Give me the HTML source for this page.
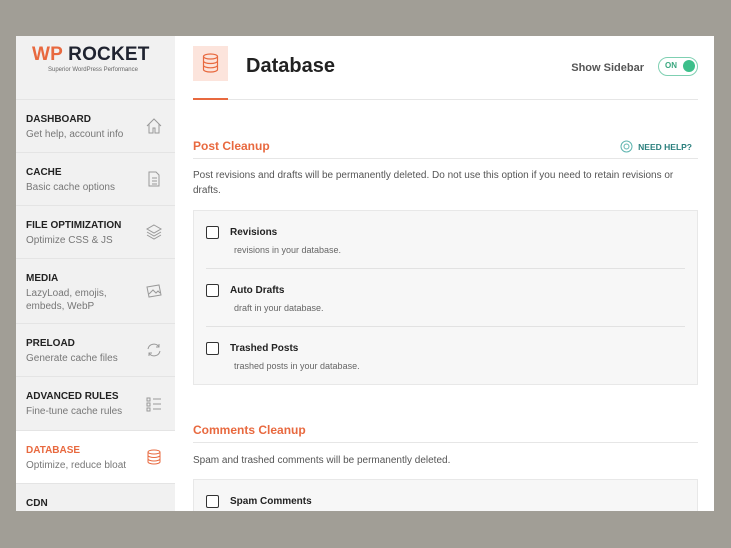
<!DOCTYPE html><html><head><style>
*{margin:0;padding:0;box-sizing:border-box}
body{width:731px;height:548px;background:#a19e96;font-family:"Liberation Sans",sans-serif;position:relative;overflow:hidden}
#app{position:absolute;left:16px;top:36px;width:698px;height:475px;background:#fff;overflow:hidden}
#side{position:absolute;left:0;top:0;width:159px;height:475px;background:#f1f1f1}
.logo{height:64px;border-bottom:1px solid #e4e4e4;position:relative}
.logo .t{position:absolute;left:16px;top:8px;font-weight:bold;font-size:19px;color:#1f2330;letter-spacing:0.2px}
.logo .t span{color:#e8693f}
.logo .s{position:absolute;left:32px;top:31px;font-size:6px;color:#666}
.it{position:relative;border-bottom:1px solid #e4e4e4;padding:14px 0 0 10px}
.it b{display:block;font-size:10px;color:#222}
.it i{display:block;font-style:normal;font-size:10px;color:#777;margin-top:3px;line-height:13px}
.it svg{position:absolute;right:12px;top:50%;margin-top:-9px}
.it.act{background:#fff}.it.act b{color:#e8693f}
#main{position:absolute;left:177px;top:0;right:16px}
.hico{position:absolute;left:0;top:10px;width:35px;height:35px;background:#fce4dc}
h1{position:absolute;left:53px;top:19px;font-size:20px;font-weight:bold;color:#222}
.ss{position:absolute;right:54px;top:26px;font-size:11px;font-weight:bold;color:#555}
.tg{position:absolute;right:0;top:21px;width:40px;height:19px;border:1.5px solid #7fd0b2;border-radius:10px}
.tg span{position:absolute;left:6px;top:3px;font-size:8px;font-weight:bold;color:#3aa77f}
.tg i{position:absolute;right:2px;top:2px;width:12px;height:12px;border-radius:50%;background:#3cbf8a}
.hl{position:absolute;left:0;right:0;top:63px;height:1px;background:#e6e6e6}
.hl2{position:absolute;left:0;top:62px;width:35px;height:2px;background:#e8693f}
.sec{position:absolute;left:0;right:0;font-size:12px;font-weight:bold;color:#e8693f;border-bottom:1px solid #e6e6e6;height:20px}
.nh{position:absolute;right:6px;top:104px;font-size:8.5px;font-weight:bold;color:#2a7f7d}
.p{position:absolute;left:0;right:0;font-size:10px;color:#555;line-height:15px}
.box{position:absolute;left:0;right:0;background:#f7f7f7;border:1px solid #e8e8e8}
.row{position:relative;height:58px;margin:0 12px;border-bottom:1px solid #e2e2e2}
.row:last-child{border:none}
.cb{position:absolute;left:0;top:15px;width:13px;height:13px;border:1.5px solid #333;border-radius:2px;background:#fff}
.row b{position:absolute;left:24px;top:16px;font-size:10px;color:#222}
.row i{position:absolute;left:28px;top:34px;font-size:9px;color:#666;font-style:normal}
</style></head><body><div id="app">
<div id="side">
<div class="logo"><div class="t"><span>WP</span> ROCKET</div><div class="s">Superior WordPress Performance</div></div>
<div class="it" style="height:53px"><b>DASHBOARD</b><i>Get help, account info</i><svg width="18" height="18" viewBox="0 0 18 18" fill="none" stroke="#999"><path d="M2 9L9 2l7 7M4 7v9h4v-5h2v5h4V7"/></svg></div>
<div class="it" style="height:53px"><b>CACHE</b><i>Basic cache options</i><svg width="18" height="18" viewBox="0 0 18 18" fill="none" stroke="#999"><path d="M4 2h7l3 3v11H4zM7 8h5M7 11h5M7 14h5"/></svg></div>
<div class="it" style="height:53px"><b>FILE OPTIMIZATION</b><i>Optimize CSS &amp; JS</i><svg width="18" height="18" viewBox="0 0 18 18" fill="none" stroke="#999"><path d="M9 2l7 4-7 4-7-4zM2 9l7 4 7-4M2 12l7 4 7-4"/></svg></div>
<div class="it" style="height:65px"><b>MEDIA</b><i>LazyLoad, emojis,<br>embeds, WebP</i><svg width="18" height="18" viewBox="0 0 18 18" fill="none" stroke="#999"><path d="M2 5l12-2 2 10-12 2zM4 12l4-4 3 3 2-2 2 2"/></svg></div>
<div class="it" style="height:53px"><b>PRELOAD</b><i>Generate cache files</i><svg width="18" height="18" viewBox="0 0 18 18" fill="none" stroke="#999"><path d="M3 8a6 6 0 0 1 11-2M15 10a6 6 0 0 1-11 2M14 3v3h-3M4 15v-3h3"/></svg></div>
<div class="it" style="height:54px"><b>ADVANCED RULES</b><i>Fine-tune cache rules</i><svg width="18" height="18" viewBox="0 0 18 18" fill="none" stroke="#999"><path d="M2 3h3v3H2zM2 8h3v3H2zM2 13h3v3H2zM8 4h8M8 9h8M8 14h8"/></svg></div>
<div class="it act" style="height:53px"><b>DATABASE</b><i>Optimize, reduce bloat</i><svg width="18" height="18" viewBox="0 0 18 18" fill="none" stroke="#e8693f"><ellipse cx="9" cy="4" rx="6" ry="2"/><path d="M3 4v10c0 1 3 2 6 2s6-1 6-2V4M3 7.5c0 1 3 2 6 2s6-1 6-2M3 11c0 1 3 2 6 2s6-1 6-2"/></svg></div>
<div class="it" style="height:53px"><b>CDN</b><i>&nbsp;</i></div>
</div>
<div id="main">
<div class="hico"><svg width="35" height="35" viewBox="0 0 35 35" fill="none" stroke="#e8693f" stroke-width="1.2"><ellipse cx="17.5" cy="10.5" rx="7" ry="2.5"/><path d="M10.5 10.5v13c0 1.4 3.2 2.5 7 2.5s7-1.1 7-2.5v-13M10.5 15c0 1.4 3.2 2.5 7 2.5s7-1.1 7-2.5M10.5 19.3c0 1.4 3.2 2.5 7 2.5s7-1.1 7-2.5"/></svg></div>
<h1>Database</h1><div class="ss">Show Sidebar</div><div class="tg"><span>ON</span><i></i></div>
<div class="hl"></div><div class="hl2"></div>
<div class="sec" style="top:103px">Post Cleanup</div>
<div class="nh"><svg width="13" height="13" viewBox="0 0 13 13" fill="none" stroke="#5fb5b0" style="vertical-align:-3px;margin-right:5px"><circle cx="6.5" cy="6.5" r="5.5"/><circle cx="6.5" cy="6.5" r="2.5"/></svg>NEED HELP?</div>
<div class="p" style="top:132px">Post revisions and drafts will be permanently deleted. Do not use this option if you need to retain revisions or drafts.</div>
<div class="box" style="top:174px;height:175px">
<div class="row"><div class="cb"></div><b>Revisions</b><i>revisions in your database.</i></div>
<div class="row"><div class="cb"></div><b>Auto Drafts</b><i>draft in your database.</i></div>
<div class="row"><div class="cb"></div><b>Trashed Posts</b><i>trashed posts in your database.</i></div>
</div>
<div class="sec" style="top:387px">Comments Cleanup</div>
<div class="p" style="top:417px">Spam and trashed comments will be permanently deleted.</div>
<div class="box" style="top:443px;height:60px"><div class="row"><div class="cb"></div><b>Spam Comments</b></div></div>
</div>
</div></body></html>
